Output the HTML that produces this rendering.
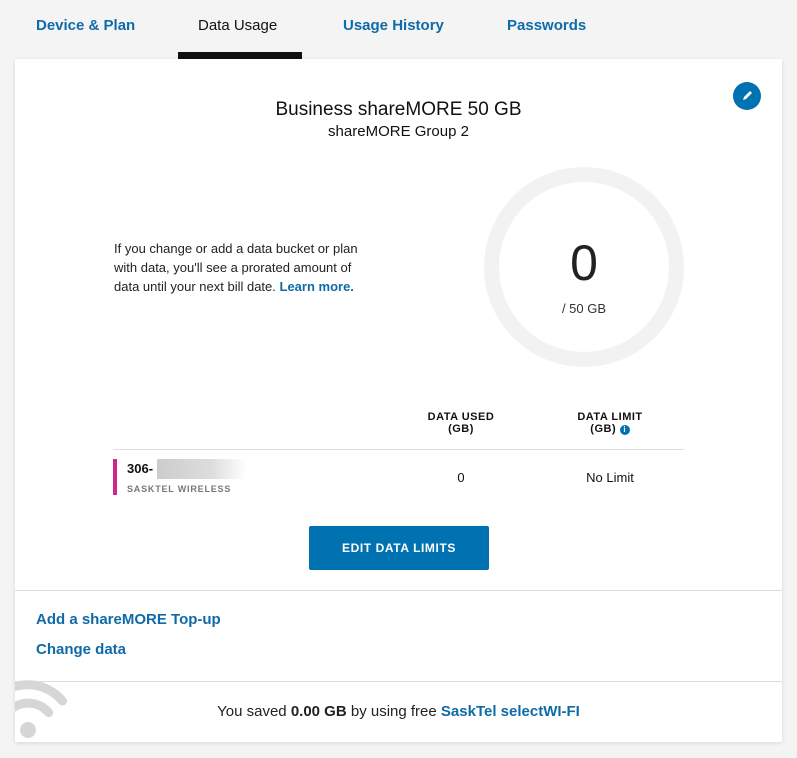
<!DOCTYPE html>
<html><head><style>
body{margin:0;width:797px;height:758px;background:#f4f4f4;font-family:"Liberation Sans",sans-serif;position:relative;overflow:hidden;color:#111}
.tab{position:absolute;top:17px;font-size:15px;font-weight:bold;color:#0f6ba8}
.card{position:absolute;left:15px;top:59px;width:767px;height:683px;background:#fff;box-shadow:0 1px 4px rgba(0,0,0,.12);overflow:hidden}
.a{position:absolute}
</style></head><body>
<div class="tab" style="left:36px">Device &amp; Plan</div>
<div class="tab" style="left:198px;color:#111;font-weight:normal">Data Usage</div>
<div class="a" style="left:178px;top:52px;width:124px;height:7px;background:#111"></div>
<div class="tab" style="left:343px">Usage History</div>
<div class="tab" style="left:507px">Passwords</div>
<div class="card">
 <div class="a" style="left:718px;top:23px;width:28px;height:28px;border-radius:50%;background:#0072b1"><svg width="28" height="28"><path d="M10 18l1-3 6-6 2 2-6 6z" fill="#fff"/></svg></div>
 <div class="a" style="left:0;width:767px;top:40px;text-align:center;font-size:19px">Business shareMORE 50 GB</div>
 <div class="a" style="left:0;width:767px;top:64px;text-align:center;font-size:15px">shareMORE Group 2</div>
 <div class="a" style="left:99px;top:180px;width:262px;font-size:13px;line-height:19px;color:#222">If you change or add a data bucket or plan with data, you'll see a prorated amount of data until your next bill date. <b style="color:#0f6ba8">Learn more.</b></div>
 <div class="a" style="left:469px;top:108px;width:170px;height:170px;border-radius:50%;border:15px solid #f2f2f2"></div>
 <div class="a" style="left:469px;top:175px;width:200px;text-align:center;font-size:50px;font-weight:300;color:#222">0</div>
 <div class="a" style="left:469px;top:242px;width:200px;text-align:center;font-size:13px;color:#333">/ 50 GB</div>
 <div class="a" style="left:396px;top:352px;width:100px;text-align:center;font-size:11px;font-weight:bold;letter-spacing:.5px;line-height:12px">DATA USED<br>(GB)</div>
 <div class="a" style="left:545px;top:352px;width:100px;text-align:center;font-size:11px;font-weight:bold;letter-spacing:.5px;line-height:12px">DATA LIMIT<br>(GB) <span style="display:inline-block;width:10px;height:10px;border-radius:50%;background:#0072b1;color:#fff;font-size:8px;line-height:10px">i</span></div>
 <div class="a" style="left:98px;top:390px;width:571px;height:1px;background:#ddd"></div>
 <div class="a" style="left:98px;top:400px;width:4px;height:36px;background:#d1268e"></div>
 <div class="a" style="left:112px;top:402px;font-size:13px;font-weight:bold">306-</div>
 <div class="a" style="left:142px;top:400px;width:90px;height:20px;background:linear-gradient(90deg,#ccc,#ddd 60%,#fff)"></div>
 <div class="a" style="left:112px;top:425px;font-size:9px;font-weight:bold;color:#777;letter-spacing:.8px">SASKTEL WIRELESS</div>
 <div class="a" style="left:396px;top:411px;width:100px;text-align:center;font-size:13px">0</div>
 <div class="a" style="left:545px;top:411px;width:100px;text-align:center;font-size:13px">No Limit</div>
 <div class="a" style="left:294px;top:467px;width:180px;height:44px;background:#0072b1;border-radius:2px;color:#fff;font-size:12px;font-weight:bold;letter-spacing:.6px;text-align:center;line-height:44px">EDIT DATA LIMITS</div>
 <div class="a" style="left:0;top:531px;width:767px;height:1px;background:#ddd"></div>
 <div class="a" style="left:21px;top:552px;font-size:15px;font-weight:bold;color:#0f6ba8">Add a shareMORE Top-up</div>
 <div class="a" style="left:21px;top:582px;font-size:15px;font-weight:bold;color:#0f6ba8">Change data</div>
 <div class="a" style="left:0;top:622px;width:767px;height:1px;background:#ddd"></div>
 <svg class="a" style="left:0;top:620px" width="70" height="63"><circle cx="13" cy="51" r="8" fill="#d6d6d6"/><path d="M-6 32A27 27 0 0 1 33.7 33.6M-19 19A45 45 0 0 1 47.5 22" stroke="#d6d6d6" stroke-width="9" fill="none" stroke-linecap="round"/></svg>
 <div class="a" style="left:0;width:767px;top:644px;text-align:center;font-size:15px;color:#222">You saved <b>0.00 GB</b> by using free <b style="color:#0f6ba8">SaskTel selectWI-FI</b></div>
</div>
</body></html>
